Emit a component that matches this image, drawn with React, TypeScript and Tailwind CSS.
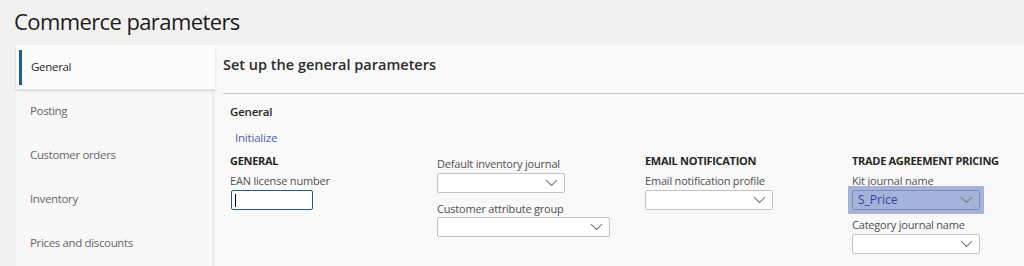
import React from "react";

const Chevron = () => (
  <svg width="13" height="8" viewBox="0 0 13 8" className="shrink-0">
    <path d="M1 1.2 L6.5 6.5 L12 1.2" fill="none" stroke="#7a7a7a" strokeWidth="1.1" />
  </svg>
);

const Select = ({ w, value }: { w: string; value?: string }) => (
  <div className={`${w} h-[20px] border border-[#c2c2c2] rounded-[2px] bg-white flex items-center justify-between pl-[6px] pr-[6px]`}>
    <span className="text-[12px] text-[#3b4ea0] leading-none">{value ?? ""}</span>
    <Chevron />
  </div>
);

const Label = ({ children }: { children: React.ReactNode }) => (
  <div className="h-[19px] pt-[2px] flex items-center text-[11px] tracking-[-0.2px] text-[#505050] whitespace-nowrap">{children}</div>
);

const Heading = ({ children }: { children: React.ReactNode }) => (
  <div className="h-[20px] flex items-center text-[11px] tracking-[-0.3px] font-bold text-[#262626] whitespace-nowrap">{children}</div>
);

export default function App() {
  const navItems = ["Posting", "Customer orders", "Inventory", "Prices and discounts"];
  return (
    <div
      className="w-[1024px] h-[266px] overflow-hidden bg-[#f2f1f0] flex flex-col"
      style={{ fontFamily: '"Open Sans", "Noto Sans", sans-serif' }}
    >
      <div className="h-[45px] pl-[14px] pt-[3px] text-[22px] tracking-[-0.6px] text-[#1b1b1b] leading-[36px] whitespace-nowrap">
        Commerce parameters
      </div>
      <div className="flex flex-1 pl-[16px]">
        <div className="w-[199px] flex flex-col">
          <div className="h-[44px] bg-[#fcfcfc] shadow-[0_2px_3px_rgba(0,0,0,0.12)] flex items-center relative z-10">
            <div className="w-[3px] h-[35px] bg-[#1a5e93] ml-[3px]" />
            <span className="ml-[9px] text-[11.5px] tracking-[-0.3px] text-[#262626]">General</span>
          </div>
          <div className="flex-1 bg-[#f8f8f8] border-r-[3px] border-[#ededed]">
            {navItems.map((t) => (
              <div key={t} className="h-[44px] flex items-center pl-[14px] text-[11.5px] tracking-[-0.35px] text-[#666666] whitespace-nowrap">
                {t}
              </div>
            ))}
          </div>
        </div>
        <div className="flex-1 bg-[#f9f9f9] flex flex-col pl-[8px]">
          <div className="h-[49px] border-b border-[#c8c8c8] flex items-center pb-[8px] text-[14.5px] font-semibold text-[#2b2b2b] whitespace-nowrap">
            Set up the general parameters
          </div>
          <div className="pl-[7px] flex flex-col">
            <div className="h-[30px] pt-[5px] flex items-center text-[11.5px] tracking-[-0.2px] font-semibold text-[#262626]">General</div>
            <div className="h-[27px] pt-[1px] flex items-center pl-[5px] text-[11.5px] tracking-[-0.2px] text-[#4a63a8]">Initialize</div>
            <div className="flex">
              <div className="w-[207px] flex flex-col">
                <Heading>GENERAL</Heading>
                <Label>EAN license number</Label>
                <div className="w-[82px] h-[20px] ml-[1px] border border-[#1f5a8c] rounded-[2px] bg-white flex items-center pl-[3px]">
                  <div className="w-[1px] h-[13px] bg-black" />
                </div>
              </div>
              <div className="w-[208px] flex flex-col pt-[4px]">
                <div className="h-[18px] pt-[1px] flex items-center text-[11px] tracking-[-0.2px] text-[#505050] whitespace-nowrap">Default inventory journal</div>
                <Select w="w-[128px]" />
                <div className="h-[24px] pt-[8px] flex items-center text-[11px] tracking-[-0.2px] text-[#505050] whitespace-nowrap">Customer attribute group</div>
                <Select w="w-[173px]" />
              </div>
              <div className="w-[207px] flex flex-col">
                <Heading>EMAIL NOTIFICATION</Heading>
                <Label>Email notification profile</Label>
                <Select w="w-[128px]" />
              </div>
              <div className="flex flex-col">
                <Heading>TRADE AGREEMENT PRICING</Heading>
                <Label>Kit journal name</Label>
                <div className="-ml-[4px] -mt-[4px] w-[136px] p-[4px] bg-[#a5b2d9]">
                  <div className="w-[128px] h-[20px] border border-[#7e8bb5] rounded-[2px] bg-[#a5b2d9] flex items-center justify-between pl-[5px] pr-[6px]">
                    <span className="text-[12px] text-[#2f43a0] leading-none">S_Price</span>
                    <Chevron />
                  </div>
                </div>
                <div className="h-[20px] pt-[3px] flex items-center text-[11px] tracking-[-0.2px] text-[#505050] whitespace-nowrap">Category journal name</div>
                <Select w="w-[128px]" />
              </div>
            </div>
          </div>
        </div>
      </div>
    </div>
  );
}
